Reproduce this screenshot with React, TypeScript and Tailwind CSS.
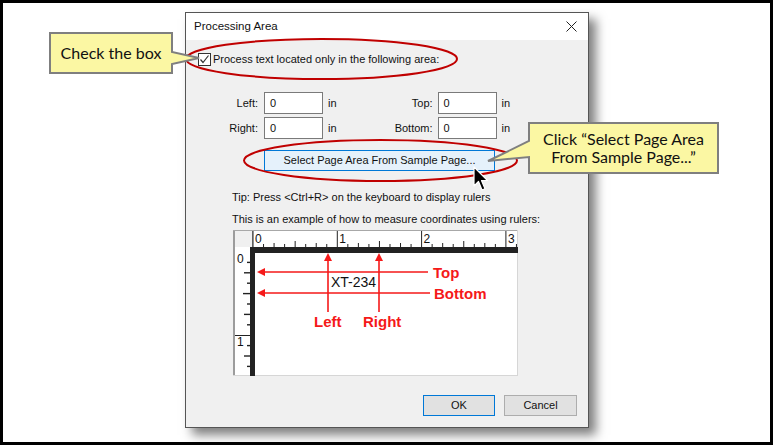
import React from "react";

const RED = "#f51919";
const PPI = 84.3;

function RulerSample() {
  const hTicks: React.ReactNode[] = [];
  for (let k = 1; k < 32; k++) {
    if (k % 8 === 0) continue;
    const x = 20 + (k * PPI) / 8;
    if (x > 284) break;
    const y1 = k % 8 === 4 ? 11 : k % 4 === 2 ? 13 : 14;
    hTicks.push(<line key={k} x1={x} x2={x} y1={y1} y2={17} stroke="#222" strokeWidth={1} />);
  }
  const vTicks: React.ReactNode[] = [];
  for (let k = 1; k < 12; k++) {
    if (k % 8 === 0) continue;
    const y = 22 + k * 10.4;
    const x1 = k % 8 === 4 ? 10 : k % 4 === 2 ? 11 : 14;
    vTicks.push(<line key={k} x1={x1} x2={17} y1={y} y2={y} stroke="#222" strokeWidth={1.4} />);
  }

  return (
    <svg width={285} height={146} viewBox="0 0 285 146" className="block">
      <rect x={0} y={0} width={285} height={146} fill="#fff" />
      {/* corner */}
      <rect x={2} y={1} width={17} height={16} fill="#f0f0f0" />
      <line x1={19.5} x2={19.5} y1={1} y2={17} stroke="#9a9a9a" />
      {/* frame */}
      <line x1={1} x2={1} y1={0} y2={146} stroke="#9c9c9c" strokeWidth={2} />
      <line x1={0} x2={285} y1={0.5} y2={0.5} stroke="#a8a8a8" />
      <line x1={284.5} x2={284.5} y1={0} y2={146} stroke="#d6d6d6" />
      <line x1={0} x2={285} y1={145.5} y2={145.5} stroke="#d6d6d6" />

      {/* horizontal ruler */}
      {[0, 1, 2, 3].map((n) => {
        const x = 20 + n * PPI;
        return (
          <g key={n}>
            <line x1={x} x2={x} y1={1} y2={17} stroke="#222" strokeWidth={1} />
            <text x={x + 2} y={12.5} fontSize={12} fontFamily='"Liberation Sans", Arial, sans-serif' fill="#111">
              {n}
            </text>
          </g>
        );
      })}
      {hTicks}
      <rect x={17} y={17} width={268} height={6} fill="#222" />

      {/* vertical ruler */}
      <line x1={2} x2={17} y1={105.5} y2={105.5} stroke="#222" />
      <text x={4} y={32.5} fontSize={12} fontFamily='"Liberation Sans", Arial, sans-serif' fill="#111">0</text>
      <text x={4} y={115.5} fontSize={12} fontFamily='"Liberation Sans", Arial, sans-serif' fill="#111">1</text>
      {vTicks}
      <rect x={17} y={17} width={5} height={129} fill="#222" />

      {/* annotations */}
      <line x1={95} x2={95} y1={30} y2={82} stroke={RED} strokeWidth={1.6} />
      <polygon points="95,23 91,31 99,31" fill={RED} />
      <line x1={146} x2={146} y1={30} y2={82} stroke={RED} strokeWidth={1.6} />
      <polygon points="146,23 142,31 150,31" fill={RED} />
      <line x1={31} x2={195} y1={42} y2={42} stroke={RED} strokeWidth={1.6} />
      <polygon points="24,42 32,38 32,46" fill={RED} />
      <line x1={31} x2={197} y1={63} y2={63} stroke={RED} strokeWidth={1.6} />
      <polygon points="24,63 32,59 32,67" fill={RED} />

      <g fontFamily='"Liberation Sans", Arial, sans-serif'>
        <text x={98} y={57} fontSize={14} fill="#111">XT-234</text>
        <text x={200} y={47.5} fontSize={15} fontWeight="bold" fill={RED}>Top</text>
        <text x={201} y={68.5} fontSize={15} fontWeight="bold" fill={RED}>Bottom</text>
        <text x={81} y={96.5} fontSize={15} fontWeight="bold" fill={RED}>Left</text>
        <text x={130} y={96.5} fontSize={15} fontWeight="bold" fill={RED}>Right</text>
      </g>
    </svg>
  );
}

function Field({ label, labelW, gap }: { label: string; labelW: string; gap: string }) {
  return (
    <>
      <span className={`${labelW} text-right`}>{label}</span>
      <div className={`${gap} flex h-[22px] w-[59px] items-center border border-[#7a7a7a] bg-white pl-[5px]`}>0</div>
      <span className="ml-[5px]">in</span>
    </>
  );
}

export default function App() {
  return (
    <div className="relative h-[445px] w-[773px] overflow-hidden bg-white font-['Liberation_Sans',Arial,sans-serif] text-[11px] text-[#111]">
      <div className="h-full border-[3px] border-black">
        <div className="ml-[182px] mt-[9px] flex h-[416px] w-[404px] flex-col border border-[#555] shadow-[7px_7px_10px_rgba(0,0,0,0.5)]">
          {/* title bar */}
          <div className="flex h-[27px] items-center justify-between bg-white pl-[8px] pr-[11px]">
            <span className="text-[11.5px] text-[#111]">Processing Area</span>
            <svg width={11} height={11} viewBox="0 0 11 11">
              <path d="M0.5 0.5 L10.5 10.5 M10.5 0.5 L0.5 10.5" stroke="#222" strokeWidth={1} />
            </svg>
          </div>

          {/* body */}
          <div className="flex flex-1 flex-col bg-[#f0f0f0]">
            <div className="ml-[12px] mt-[13px] flex h-[13px] items-center gap-[2px]">
              <div className="flex h-[13px] w-[13px] items-center justify-center border border-[#333] bg-white">
                <svg width={11} height={11} viewBox="0 0 11 11">
                  <path d="M1.5 5.5 L4 8.5 L9.5 1.5" fill="none" stroke="#333" strokeWidth={1.2} />
                </svg>
              </div>
              <span>Process text located only in the following area:</span>
            </div>

            <div className="mt-[26px] flex h-[22px] items-center">
              <Field label="Left:" labelW="w-[72px]" gap="ml-[6px]" />
              <span className="w-[36px]" />
              <Field label="Top:" labelW="w-[60px]" gap="ml-[5px]" />
            </div>
            <div className="mt-[3px] flex h-[22px] items-center">
              <Field label="Right:" labelW="w-[72px]" gap="ml-[6px]" />
              <span className="w-[36px]" />
              <Field label="Bottom:" labelW="w-[60px]" gap="ml-[5px]" />
            </div>

            <div className="ml-[78px] mt-[11px] flex h-[21px] w-[231px] items-center justify-center border border-[#0078d7] bg-[#e5f1fb]">
              Select Page Area From Sample Page...
            </div>

            <p className="ml-[46px] mt-[19px] leading-[14px]">Tip: Press &lt;Ctrl+R&gt; on the keyboard to display rulers</p>
            <p className="ml-[46px] mt-[8px] leading-[14px]">This is an example of how to measure coordinates using rulers:</p>

            <div className="ml-[47px] mt-[4px]">
              <RulerSample />
            </div>

            <div className="ml-[237px] mt-[19px] flex gap-[9px]">
              <div className="flex h-[21px] w-[72px] items-center justify-center border border-[#0078d7] bg-[#e1e1e1]">OK</div>
              <div className="flex h-[21px] w-[73px] items-center justify-center border border-[#adadad] bg-[#e1e1e1]">Cancel</div>
            </div>
          </div>
        </div>
      </div>

      {/* annotation overlay */}
      <svg className="pointer-events-none absolute left-0 top-0" width={773} height={445}>
        <ellipse cx={321.5} cy={59} rx={135.5} ry={20} fill="none" stroke="#c00000" strokeWidth={2} />
        <ellipse cx={380.5} cy={160.5} rx={136.5} ry={20.5} fill="none" stroke="#c00000" strokeWidth={2} />
        <path d="M50 33 H172 V52 L199 58 L172 64 V73 H50 Z" fill="#fbf7a3" stroke="#7f7f7f" strokeWidth={2} strokeLinejoin="miter" />
        <path d="M529 123 H718 V173 H529 V157 L488 161 L529 141 Z" fill="#fbf7a3" stroke="#7f7f7f" strokeWidth={2} />
      </svg>

      <div className="absolute left-[51px] top-[34px] flex h-[38px] w-[120px] items-center justify-center font-['Lato',sans-serif] text-[16px] text-[#111]">
        Check the box
      </div>
      <div className="absolute left-[530px] top-[124px] flex h-[48px] w-[187px] flex-col items-center justify-center font-['Lato',sans-serif] text-[16px] leading-[18px] text-[#111]">
        <span>Click “Select Page Area</span>
        <span>From Sample Page...”</span>
      </div>

      {/* mouse pointer */}
      <svg className="pointer-events-none absolute left-[473px] top-[166px]" width={18} height={27} viewBox="0 0 18 27">
        <path d="M1 1 L1 20 L5.5 15.5 L9 24 L12 22.8 L8.5 14.5 L14.5 14.5 Z" fill="#000" stroke="#fff" strokeWidth={1.2} strokeLinejoin="round" />
      </svg>
    </div>
  );
}
